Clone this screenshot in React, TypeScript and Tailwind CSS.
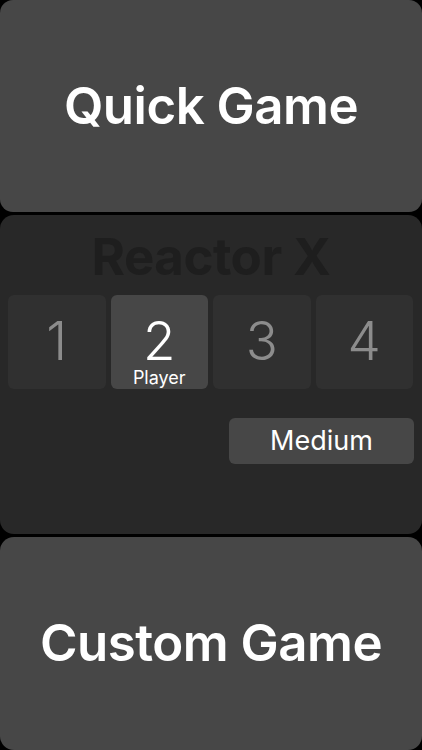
import { useState } from "react";

const players = [1, 2, 3, 4];

function PlayerTile({ count, selected, onSelect }: { count: number; selected: boolean; onSelect: () => void }) {
    return (
        <button
            onClick={onSelect}
            className={`relative flex-1 h-[94px] rounded-[6px] flex items-start justify-center ${selected ? "bg-[#474747] text-white" : "bg-[#303030] text-[#8c8c8c]"}`}
        >
            <span className="mt-[25px] text-[53px] leading-[42px] font-light">{count}</span>
            {selected && <span className="absolute bottom-[1px] left-0 right-0 text-center text-[18px] leading-[20px] text-white">Player</span>}
        </button>
    );
}

export default function App() {
    const [selected, setSelected] = useState(2);

    return (
        <div className="w-[422px] h-[750px] bg-black flex flex-col gap-[3px] overflow-hidden font-['Inter','Liberation_Sans',sans-serif]">
            <button className="h-[212px] shrink-0 rounded-[13px] bg-[#474747] flex items-center justify-center text-white text-[51px] font-semibold tracking-[-0.5px]">
                Quick Game
            </button>

            <section className="h-[319px] shrink-0 rounded-[14px] bg-[#282828] px-[8px] pt-[14px] flex flex-col">
                <h1 className="text-center text-[#1e1e1e] text-[51px] leading-[56px] font-bold tracking-[-0.5px]">Reactor X</h1>
                <div className="mt-[10px] flex gap-[5px] pr-[1px]">
                    {players.map((n) => (
                        <PlayerTile key={n} count={n} selected={selected === n} onSelect={() => setSelected(n)} />
                    ))}
                </div>
                <div className="mt-[29px] flex justify-end">
                    <button className="w-[185px] h-[46px] rounded-[6px] bg-[#474747] text-white text-[27px]">Medium</button>
                </div>
            </section>

            <button className="h-[213px] shrink-0 rounded-[14px] bg-[#474747] flex items-center justify-center text-white text-[51px] font-semibold tracking-[-0.5px]">
                Custom Game
            </button>
        </div>
    );
}
